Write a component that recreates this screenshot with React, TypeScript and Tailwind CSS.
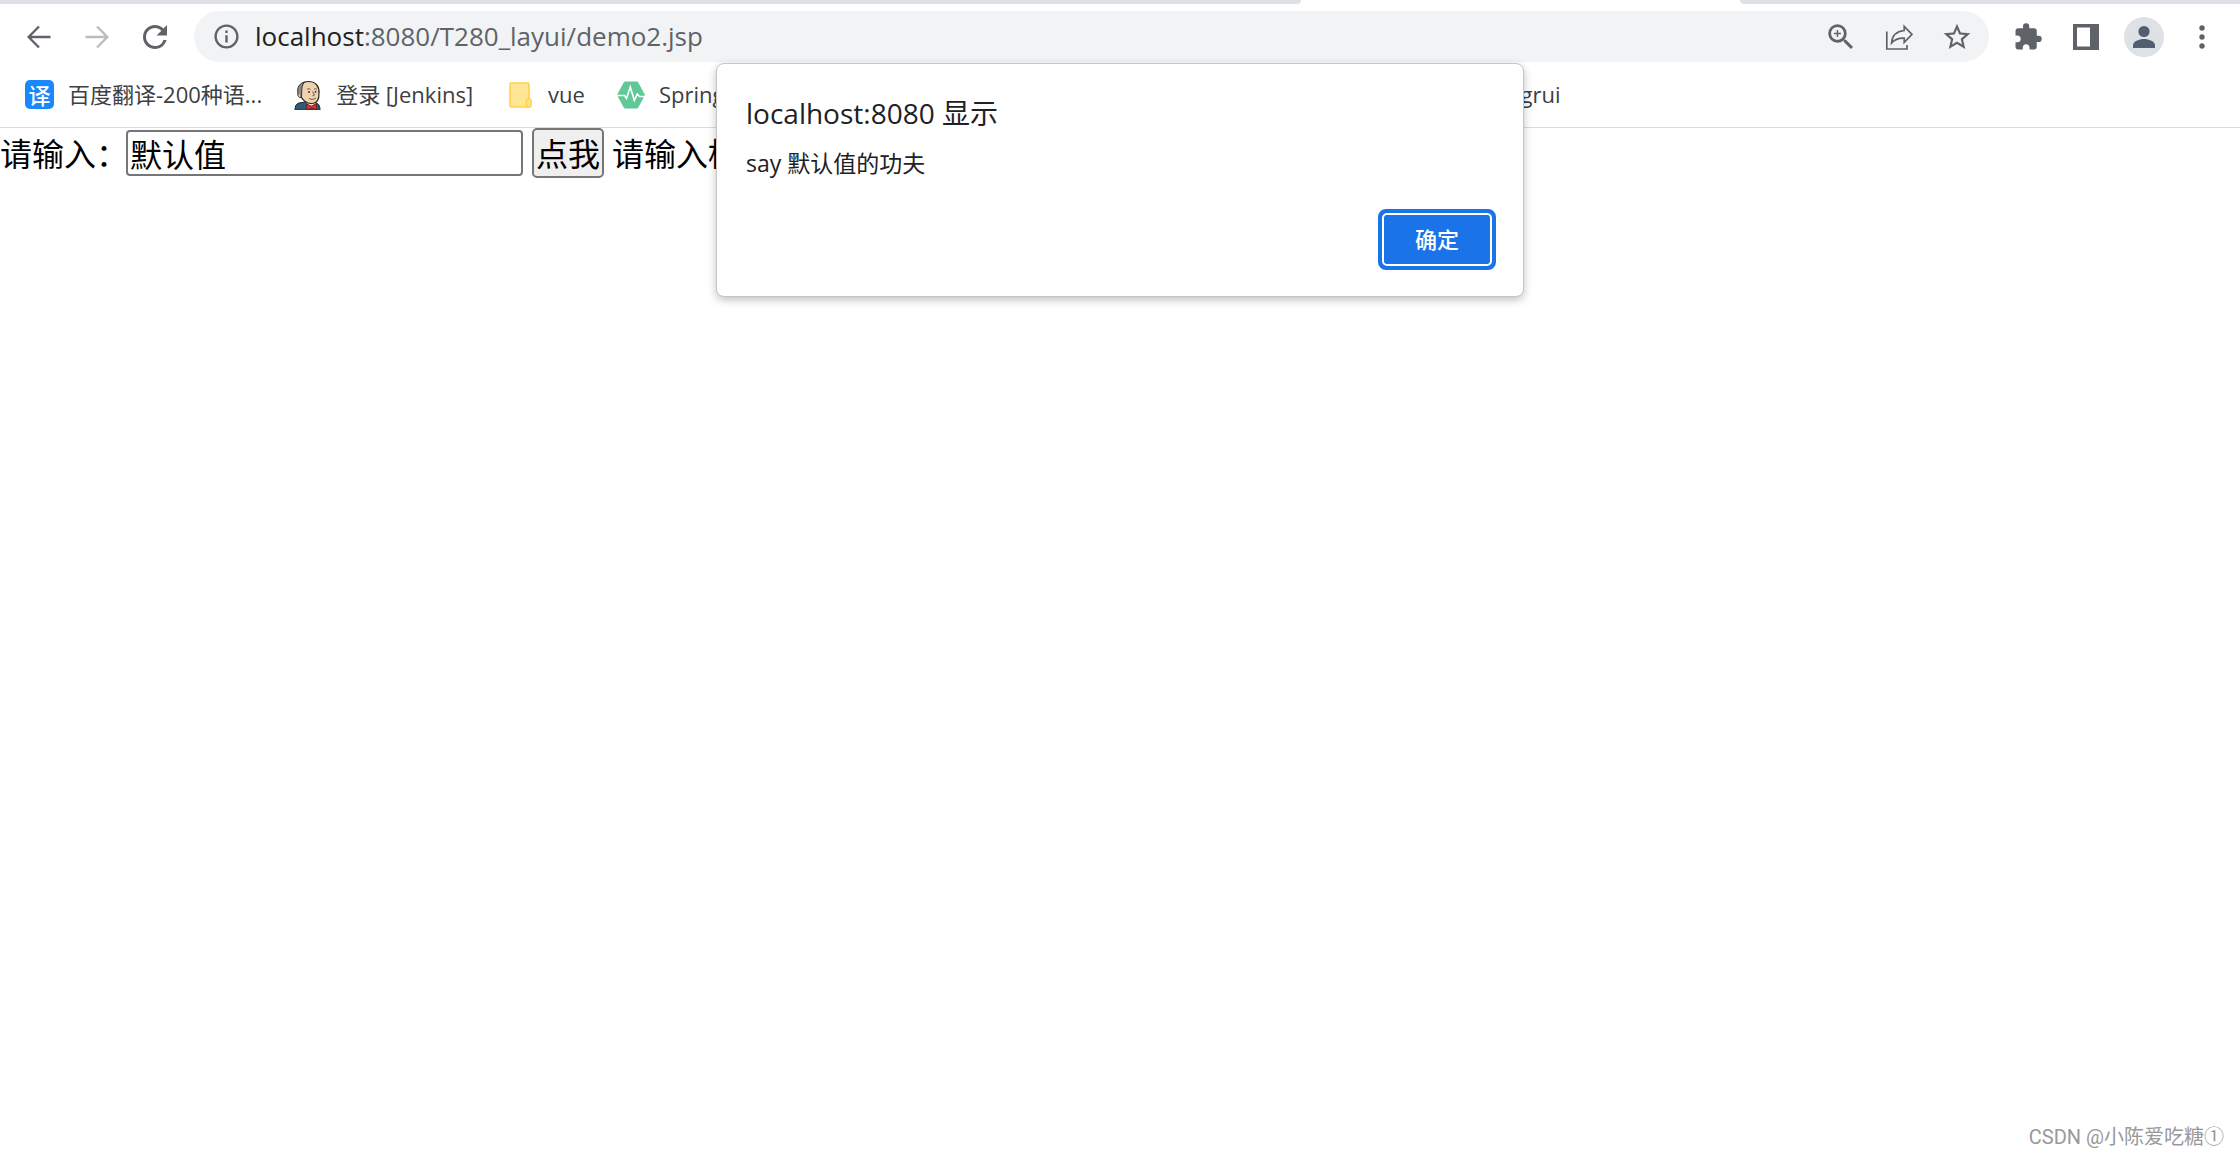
import { useState } from 'react';
import type { ReactNode } from 'react';
import { MdExtension, MdInfoOutline, MdRefresh, MdStarBorder, MdZoomIn } from 'react-icons/md';

function IconButton({ label, children }: { label: string; children: ReactNode }) {
  return (
    <button type="button" aria-label={label} className="flex size-12 shrink-0 items-center justify-center text-[#5f6368]">
      {children}
    </button>
  );
}

function BackIcon() {
  return (
    <svg width="24" height="24" viewBox="0 0 24 24" fill="none" stroke="currentColor" strokeWidth="2.4" aria-hidden="true">
      <path d="M23.5 12H2M12 1.5 1.6 12 12 22.5" />
    </svg>
  );
}

function ForwardIcon() {
  return (
    <svg width="24" height="24" viewBox="0 0 24 24" fill="none" stroke="#babcbe" strokeWidth="2.4" aria-hidden="true">
      <path d="M.5 12H22M12 1.5 22.4 12 12 22.5" />
    </svg>
  );
}

function ShareIcon() {
  return (
    <svg width="28" height="28" viewBox="0 0 28 28" fill="none" stroke="currentColor" strokeWidth="1.7" aria-hidden="true">
      <path d="M1.8 8.5V26H22v-4" />
      <path d="M19.2 3.4 27 11.4l-7.8 8v-4.2C14 15 10 16 6.6 20 7 13 11 8.3 19.2 7.5Z" />
    </svg>
  );
}

function SidePanelIcon() {
  return (
    <svg width="26" height="26" viewBox="0 0 26 26" aria-hidden="true">
      <path fill="currentColor" fillRule="evenodd" d="M0 0h26v26H0ZM4 3.5v19h13v-19Z" />
    </svg>
  );
}

function AvatarIcon() {
  return (
    <svg width="40" height="40" viewBox="0 0 40 40" aria-hidden="true">
      <circle cx="20" cy="20" r="20" fill="#dee1e6" />
      <g fill="#525d70">
        <circle cx="20" cy="14.5" r="5.6" />
        <path d="M9 31v-2.5c0-4.200 6-6.500 11-6.500s11 2.300 11 6.500V31Z" />
      </g>
    </svg>
  );
}

function MenuIcon() {
  return (
    <svg width="6" height="24" viewBox="0 0 6 24" fill="currentColor" aria-hidden="true">
      <circle cx="3" cy="3" r="2.7" />
      <circle cx="3" cy="12" r="2.7" />
      <circle cx="3" cy="21" r="2.7" />
    </svg>
  );
}

function JenkinsIcon() {
  return (
    <svg width="28" height="30" viewBox="0 0 28 30" aria-hidden="true">
      <path d="M1 30c0-4 1-6 4-7l6-1 11 1c3 1 4 3 4 7Z" fill="#2f5a78" stroke="#1b2b38" strokeWidth="1" />
      <path d="M10 20.5 17 27l5-4-2-4Z" fill="#fff" />
      <path d="M6 15C3.5 8 7 1.5 14.5 1.5S25.5 7 25 13c.2 5-1.5 10-6.5 10.5C13 24 8.5 20 6 15Z" fill="#efd3b0" stroke="#2b2723" strokeWidth="1.2" />
      <path d="M4.5 16C2.5 10 3.5 4 10.5 2 8 5 8 7.5 7.8 10L7.5 16.5Z" fill="#8d8a85" stroke="#2b2723" strokeWidth=".9" />
      <path d="M5 13c-2 1-1 5 2 4.5" fill="#efd3b0" stroke="#2b2723" strokeWidth=".9" />
      <path d="M13 9.5c1-1 2.5-1 3.5 0M20 9.5c1-1 2-1 3 0M18.5 11.5l2 3.5-2 .8M15 18.5c2.5 1.2 5 1 7-.4" fill="none" stroke="#4a3a2e" strokeWidth=".8" />
      <circle cx="15" cy="12" r=".9" fill="#2b2723" />
      <circle cx="21.5" cy="11.8" r=".9" fill="#2b2723" />
      <path d="m12.5 24 5 2 5-2.5v6.2l-5-1.7-4.5 2Z" fill="#e0302c" stroke="#5f1513" strokeWidth=".7" />
    </svg>
  );
}

function FolderIcon() {
  return (
    <svg width="23" height="26" viewBox="0 0 23 26" fill="#ffe694" stroke="#ffd24a" strokeWidth="1.6" aria-hidden="true">
      <rect x="1" y="1" width="19" height="24" rx="1" />
      <rect x="17.5" y="17" width="4.5" height="8" rx="1.5" />
    </svg>
  );
}

function SpringIcon() {
  return (
    <svg width="28" height="28" viewBox="0 0 28 28" aria-hidden="true">
      <path d="M7.5 1h13L27.5 14l-7 13h-13L.5 14Z" fill="#5fc896" stroke="#5fc896" strokeLinejoin="round" />
      <path d="M0 14.500h7.500l2 3L13.300 6l4 13.500 3-6.500 2.200 2.500H28" fill="none" stroke="#fff" strokeWidth="1.6" />
    </svg>
  );
}

function TranslateIcon() {
  return (
    <span className="flex size-[29px] items-center justify-center rounded-[5px] bg-[#1888fb] text-[22px] leading-none font-medium text-white">
      译
    </span>
  );
}

function Bookmark({ icon, title, className = '' }: { icon?: ReactNode; title: string; className?: string }) {
  return (
    <a href="#" className={`flex shrink-0 items-center whitespace-nowrap ${className}`}>
      {icon}
      {title}
    </a>
  );
}

function TabStrip() {
  return (
    <div className="flex h-1 bg-white">
      <div className="w-[58.1%] rounded-br-[8px] bg-[#dee1e6]" />
      <div className="w-[19.6%]" />
      <div className="flex-1 rounded-bl-[8px] bg-[#dee1e6]" />
    </div>
  );
}

function Toolbar() {
  const [path, setPath] = useState(':8080/T280_layui/demo2.jsp');

  return (
    <div className="flex items-center pt-[7px] pr-[14px] pl-[15px]">
      <div className="flex gap-[10px]">
        <IconButton label="后退"><BackIcon /></IconButton>
        <IconButton label="前进"><ForwardIcon /></IconButton>
        <IconButton label="重新加载"><MdRefresh size={36} /></IconButton>
      </div>
      <div className="ml-[15px] flex h-[51px] flex-1 items-center rounded-full bg-[#f1f3f4] pr-2 pl-[18px] text-[26px]">
        <MdInfoOutline size={29} className="mr-[14px] text-[#5f6368]" />
        <label htmlFor="address" className="text-[#202124]">localhost</label>
        <input
          id="address"
          value={path}
          onChange={(e) => setPath(e.target.value)}
          className="min-w-0 flex-1 bg-transparent text-[#5f6368] outline-none"
        />
        <div className="flex gap-[10px]">
          <IconButton label="缩放"><MdZoomIn size={34} /></IconButton>
          <IconButton label="分享"><ShareIcon /></IconButton>
          <IconButton label="收藏"><MdStarBorder size={32} /></IconButton>
        </div>
      </div>
      <div className="ml-[15px] flex gap-[10px]">
        <IconButton label="扩展程序"><MdExtension size={30} /></IconButton>
        <IconButton label="侧边栏"><SidePanelIcon /></IconButton>
        <IconButton label="个人资料"><AvatarIcon /></IconButton>
        <IconButton label="菜单"><MenuIcon /></IconButton>
      </div>
    </div>
  );
}

function BookmarksBar() {
  return (
    <nav className="flex h-[66px] items-center gap-8 overflow-hidden border-b border-[#d9dadc] pl-[25px] text-[22px] text-[#3c4043]">
      <Bookmark icon={<TranslateIcon />} title="百度翻译-200种语..." className="gap-[14px]" />
      <Bookmark icon={<JenkinsIcon />} title="登录 [Jenkins]" className="gap-[14px]" />
      <Bookmark icon={<FolderIcon />} title="vue" className="ml-1 gap-[16px]" />
      <Bookmark icon={<SpringIcon />} title="Spring" className="gap-[14px]" />
      <Bookmark title="grui" className="ml-[764px]" />
    </nav>
  );
}

function AlertDialog({ onClose }: { onClose: () => void }) {
  return (
    <div
      role="alertdialog"
      aria-labelledby="alert-title"
      aria-describedby="alert-text"
      className="absolute top-[63px] left-1/2 w-[808px] max-w-full -translate-x-1/2 rounded-lg border border-[#c4c6c8] bg-white pt-[27px] pr-[27px] pb-[26px] pl-[29px] text-[#202124] shadow-[0_3px_8px_rgba(0,0,0,0.25)]"
    >
      <h1 id="alert-title" className="text-[28px] leading-[44px]">localhost:8080 显示</h1>
      <p id="alert-text" className="mt-3 text-[23px] leading-8">say 默认值的功夫</p>
      <div className="mt-[30px] flex justify-end">
        <button
          type="button"
          onClick={onClose}
          className="rounded-lg border-4 border-[#1a73e8] bg-[#1a73e8] text-[22px] text-white"
        >
          <span className="flex h-[53px] w-[110px] items-center justify-center rounded-[5px] border-2 border-white font-medium">确定</span>
        </button>
      </div>
    </div>
  );
}

export default function App() {
  const [value, setValue] = useState('默认值');
  const [open, setOpen] = useState(true);

  return (
    <div className="relative flex min-h-screen flex-col bg-white font-['Open_Sans','Noto_Sans_CJK_SC',sans-serif]">
      <header>
        <TabStrip />
        <Toolbar />
        <BookmarksBar />
      </header>
      <main className="flex flex-1 items-start text-[32px] leading-[45px] text-black">
        <label htmlFor="name" className="mt-[3px]">请输入：</label>
        <input
          id="name"
          value={value}
          onChange={(e) => setValue(e.target.value)}
          className="mt-[2px] -ml-[2px] h-[46px] w-[397px] rounded-[4px] border-2 border-[#767676] px-[2px]"
        />
        <button type="button" onClick={() => setOpen(true)} className="ml-[9px] rounded-[5px] border-2 border-[#767676] bg-[#efefef] px-[2px] pt-[1px]">
          点我
        </button>
        <span className="mt-[3px] ml-[8px]">请输入框</span>
      </main>
      <footer className="self-end pr-4 pb-1 font-[Roboto,'Noto_Sans_CJK_SC',sans-serif] text-[20px] leading-[30px] text-[#999]">CSDN @小陈爱吃糖①</footer>
      {open && <AlertDialog onClose={() => setOpen(false)} />}
    </div>
  );
}
